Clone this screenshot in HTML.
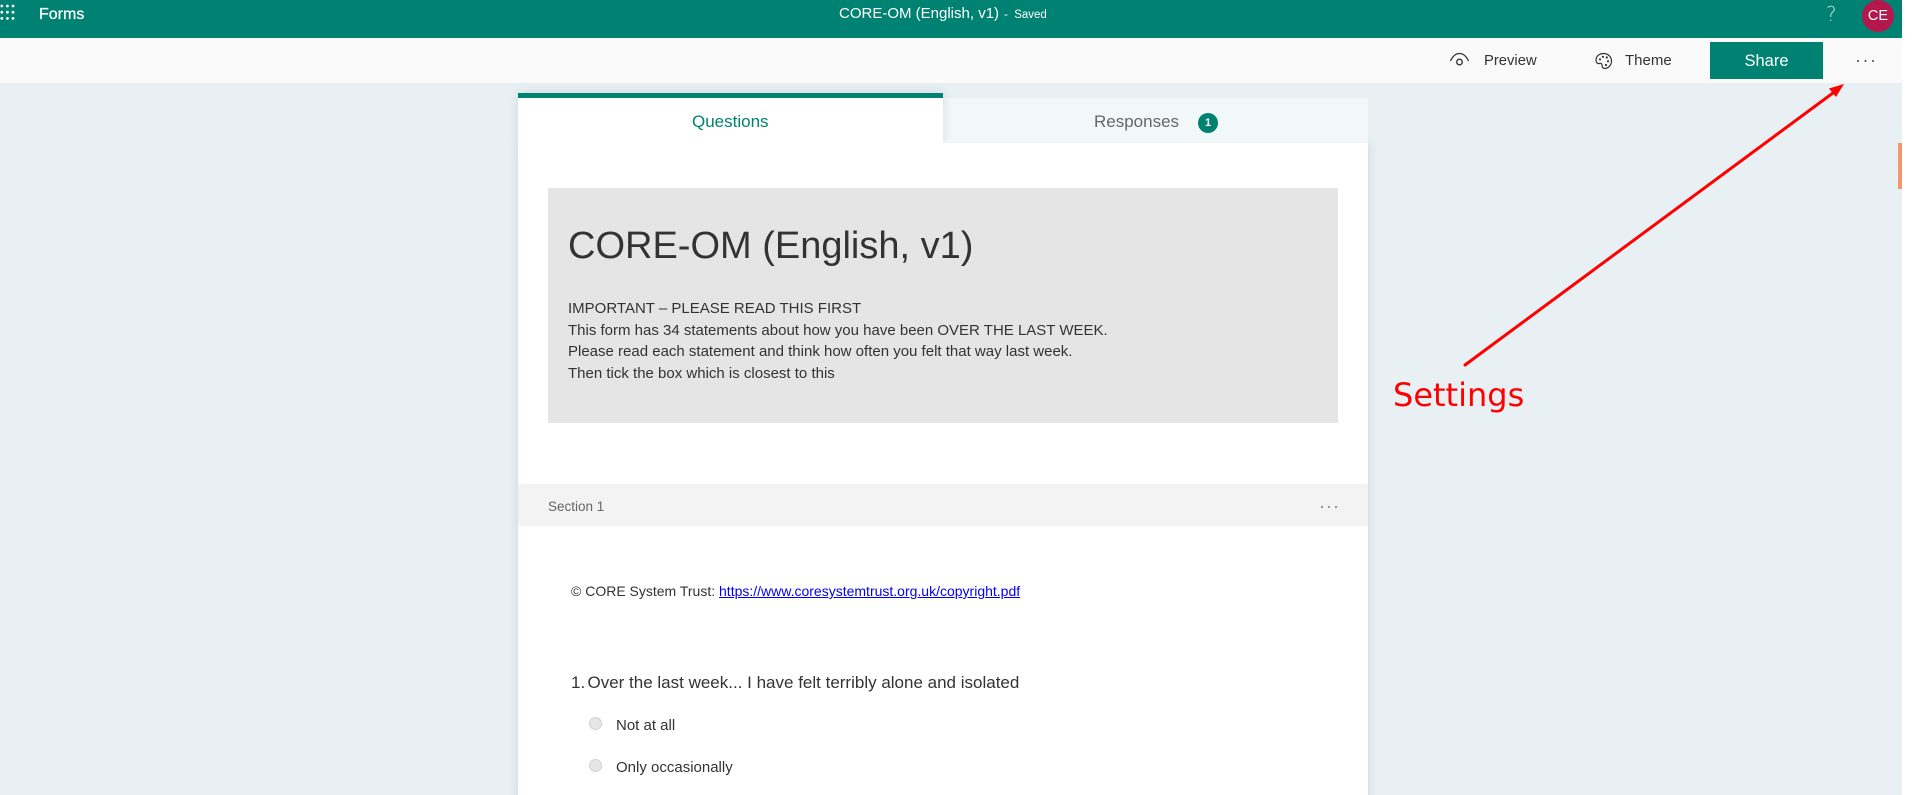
<!DOCTYPE html>
<html><head><meta charset="utf-8"><title>CORE-OM</title>
<style>
html,body{margin:0;padding:0;background:#fff;}
body{width:1915px;height:795px;overflow:hidden;position:relative;font-family:"Liberation Sans",sans-serif;}
.a{position:absolute;}
.t{position:absolute;white-space:nowrap;line-height:20px;}
</style></head><body>
<div class="a" style="left:0;top:0;width:1902px;height:795px;background:#e9f0f3;overflow:hidden;">
  <div class="a" style="left:0;top:0;width:1902px;height:38px;background:#008272;"></div>
  <div class="a" style="left:0;top:38px;width:1902px;height:45px;background:#fafafa;"></div>
  <div class="a" style="left:1898px;top:143px;width:4px;height:46px;background:#f5956b;"></div>
  <div class="a" style="left:518px;top:143px;width:850px;height:660px;background:#fff;box-shadow:0 0 10px rgba(0,60,80,.14);"></div>
  <div class="a" style="left:943px;top:98px;width:425px;height:45px;background:#f2f7f8;"></div>
  <div class="a" style="left:518px;top:93px;width:425px;height:50px;background:#fff;box-shadow:0 0 10px rgba(0,60,80,.12);"></div>
  <div class="a" style="left:518px;top:143px;width:850px;height:45px;background:#fff;"></div>
  <div class="a" style="left:518px;top:93px;width:425px;height:5px;background:#008272;"></div>
  <div class="a" style="left:548px;top:188px;width:790px;height:235px;background:#e5e5e5;"></div>
  <div class="a" style="left:518px;top:484px;width:850px;height:42px;background:#f3f3f3;"></div>
</div>

<svg class="a" style="left:0;top:0" width="20" height="24" fill="#fff">
<circle cx="1.8" cy="6" r="1.4"/><circle cx="7.400" cy="6" r="1.4"/><circle cx="13" cy="6" r="1.4"/>
<circle cx="1.8" cy="12.200" r="1.4"/><circle cx="7.400" cy="12.200" r="1.4"/><circle cx="13" cy="12.200" r="1.4"/>
<circle cx="1.8" cy="18.400" r="1.4"/><circle cx="7.400" cy="18.400" r="1.4"/><circle cx="13" cy="18.400" r="1.4"/>
</svg>
<div class="t" style="left:39px;top:5px;font-size:16px;font-weight:400;color:#fff;-webkit-text-stroke:.25px #fff;">Forms</div>
<div class="t" style="left:839px;top:4px;font-size:15px;color:#fff;">CORE-OM (English, v1)</div>
<div class="t" style="left:1004px;top:5px;font-size:11.500px;color:#fff;">-&nbsp; Saved</div>
<div class="t" style="left:1826px;top:4px;font-family:'DejaVu Sans',sans-serif;font-size:20px;font-weight:200;color:#bfe0da;">?</div>
<div class="a" style="left:1862px;top:0;width:32px;height:32px;border-radius:50%;background:#b4174b;color:#fff;font-size:14.500px;line-height:32px;text-align:center;">CE</div>

<svg class="a" style="left:1449px;top:50px" width="22" height="20" fill="none" stroke="#333" stroke-width="1.300"><path d="M1.500 11C4 5.500 7.500 3.500 10.500 3.500s6.500 2 9 7.500"/><circle cx="10.500" cy="12" r="2.800"/></svg>
<div class="t" style="left:1484px;top:51px;font-size:14.800px;color:#333;">Preview</div>
<svg class="a" style="left:1593.500px;top:51px" width="20" height="20" fill="none" stroke="#333" stroke-width="1.200"><path d="M9.500 2.500C5 2.500 2 5.500 2 9.300c0 2.500 1.800 3.600 3.300 3.200 1.500-.4 2.800.2 2.800 1.800 0 1.400.3 3.200 2.400 3.200 3.800 0 7-3.300 7-7.500 0-4.300-3.400-7.500-8-7.500z"/><circle cx="6" cy="8.300" r="1.100" fill="#333" stroke="none"/><circle cx="9" cy="5.800" r="1.100" fill="#333" stroke="none"/><circle cx="12.800" cy="6.500" r="1.100" fill="#333" stroke="none"/><circle cx="14" cy="10.300" r="1.100" fill="#333" stroke="none"/><circle cx="12" cy="14" r="1.100" fill="#333" stroke="none"/></svg>
<div class="t" style="left:1625px;top:51px;font-size:15px;color:#333;">Theme</div>
<div class="a" style="left:1710px;top:42px;width:113px;height:37px;background:#008272;color:#fff;font-size:16.500px;line-height:38px;text-align:center;">Share</div>
<svg class="a" style="left:1855px;top:58px" width="22" height="6" fill="#444"><circle cx="3" cy="3" r="1"/><circle cx="10.500" cy="3" r="1"/><circle cx="18" cy="3" r="1"/></svg>

<div class="t" style="left:692px;top:112px;font-size:17px;color:#008272;">Questions</div>
<div class="t" style="left:1094px;top:112px;font-size:17px;color:#666;">Responses</div>
<div class="a" style="left:1198px;top:113px;width:20px;height:20px;border-radius:50%;background:#008272;color:#fff;font-size:11px;font-weight:700;line-height:20px;text-align:center;">1</div>

<div class="t" style="left:568px;top:224px;font-size:38px;line-height:44px;color:#333;">CORE-OM (English, v1)</div>
<div class="t" style="left:568px;top:298px;font-size:15px;line-height:21.600px;color:#333;">IMPORTANT – PLEASE READ THIS FIRST<br>This form has 34 statements about how you have been OVER THE LAST WEEK.<br>Please read each statement and think how often you felt that way last week.<br>Then tick the box which is closest to this</div>

<div class="t" style="left:548px;top:497px;font-size:13.500px;line-height:20px;color:#666;">Section 1</div>
<svg class="a" style="left:1319px;top:504px" width="20" height="6" fill="#777"><circle cx="3" cy="3" r="1"/><circle cx="10" cy="3" r="1"/><circle cx="17" cy="3" r="1"/></svg>

<div class="t" style="left:571px;top:581px;font-size:14px;color:#333;">© CORE System Trust: <a style="color:#0000ee;text-decoration:underline;">https://www.coresystemtrust.org.uk/copyright.pdf</a></div>
<div class="t" style="left:571px;top:673px;font-size:17px;color:#333;">1.<span style="margin-left:2.300px">Over the last week... I have felt terribly alone and isolated</span></div>

<div class="a" style="left:588.500px;top:717px;width:11px;height:11px;border-radius:50%;background:#e6e6e6;border:1px solid #d2d2d2;"></div>
<div class="t" style="left:616px;top:716px;font-size:15px;color:#333;">Not at all</div>
<div class="a" style="left:588.500px;top:759px;width:11px;height:11px;border-radius:50%;background:#e6e6e6;border:1px solid #d2d2d2;"></div>
<div class="t" style="left:616px;top:758px;font-size:15px;color:#333;">Only occasionally</div>

<svg class="a" style="left:0;top:0;pointer-events:none" width="1915" height="795">
  <line x1="1465" y1="365" x2="1837" y2="90" stroke="#f00" stroke-width="3" stroke-linecap="round"/>
  <path d="M1844 84L1829 88.500L1836 97Z" fill="#f00"/>
  <text x="1393" y="406" font-family="'DejaVu Sans',sans-serif" font-size="32" fill="#f00">Settings</text>
</svg>
</body></html>
